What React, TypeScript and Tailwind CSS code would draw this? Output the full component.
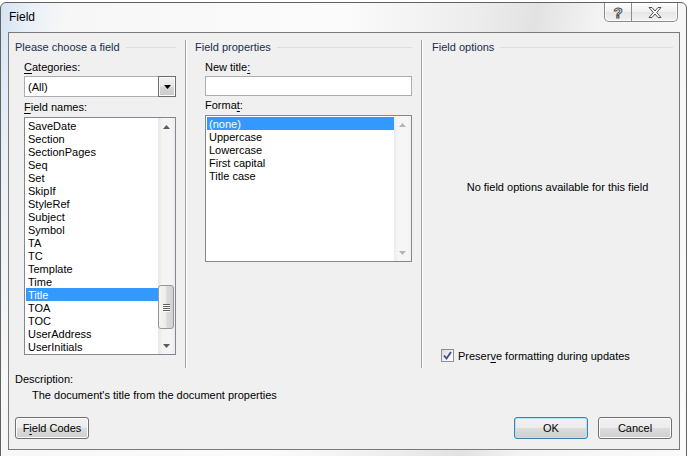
const FIELD_NAMES = [
  "SaveDate",
  "Section",
  "SectionPages",
  "Seq",
  "Set",
  "SkipIf",
  "StyleRef",
  "Subject",
  "Symbol",
  "TA",
  "TC",
  "Template",
  "Time",
  "Title",
  "TOA",
  "TOC",
  "UserAddress",
  "UserInitials",
];

const FORMATS = ["(none)", "Uppercase", "Lowercase", "First capital", "Title case"];

function Arrow({ dir, disabled }: { dir: "up" | "down"; disabled?: boolean }) {
  return (
    <svg width="7" height="4" viewBox="0 0 7 4">
      <polygon
        points={dir === "up" ? "3.5,0 7,4 0,4" : "0,0 7,0 3.5,4"}
        fill={disabled ? "#b4b4b4" : "#5c5c5c"}
      />
    </svg>
  );
}

function GroupHeader({ title }: { title: string }) {
  return (
    <div className="flex h-[14px] items-center gap-[6px]">
      <span className="whitespace-nowrap leading-[14px] text-[#1a2d4c]">{title}</span>
      <span className="h-px flex-1 bg-[#d5dfe5]" />
    </div>
  );
}

function ListRow({ label, selected }: { label: string; selected?: boolean }) {
  return (
    <div
      className={`h-[13px] whitespace-nowrap pl-[2px] leading-[15px] ${
        selected ? "bg-[#3399ff] text-white" : "text-black"
      }`}
    >
      {label}
    </div>
  );
}

function Thumb() {
  return (
    <div className="flex h-[44px] w-[16px] flex-col items-center justify-center gap-px rounded-[3px] border border-[#979797] bg-[linear-gradient(90deg,#f4f4f4,#ececec_50%,#dadada_55%,#d2d2d2)]">
      {[0, 1, 2, 3].map((i) => (
        <span key={i} className="h-px w-[7px] bg-[#5f5f5f] shadow-[0_1px_0_#ffffff]" />
      ))}
    </div>
  );
}

function Win7Button({ label, isDefault }: { label: React.ReactNode; isDefault?: boolean }) {
  return (
    <div
      className={`flex h-[22px] w-[74px] items-center justify-center rounded-[3px] border bg-[linear-gradient(180deg,#f2f2f2_0%,#ebebeb_50%,#dddddd_51%,#cfcfcf_100%)] leading-[13px] text-black ${
        isDefault
          ? "border-[#3c7fb1] shadow-[inset_0_0_0_1px_#b4e2f7]"
          : "border-[#707070] shadow-[inset_0_0_0_1px_#fcfcfc]"
      }`}
    >
      {label}
    </div>
  );
}

export default function App() {
  return (
    <div className="h-[456px] w-[687px] overflow-hidden bg-white font-['Liberation_Sans',Arial,sans-serif] text-[11px]">
      <div className="mt-[2px] h-[470px] w-[687px] rounded-t-[6px] border border-[#626262] bg-[linear-gradient(100deg,#d3e3f3_0%,#e9f0f7_4%,#f7f7f7_9%,#fbfbfb_45%,#ededed_62%,#e2e2e2_70%,#f3f3f3_78%,#fafafa_100%)]">
        {/* title bar */}
        <div className="flex h-[29px] items-start justify-between">
          <span className="pl-[8px] pt-[7px] text-[12px] leading-[14px] text-black">Field</span>
          <div className="mr-[8px] flex h-[19px] overflow-hidden rounded-b-[5px] border border-t-0 border-[#8c8c8c] bg-[linear-gradient(180deg,#fdfdfd,#f0f0f0_50%,#e6e6e6_51%,#f2f2f2)] shadow-[inset_0_0_0_1px_#ffffffb0]">
            <div className="flex w-[26px] items-center justify-center">
              <span className="text-[15px] font-bold leading-[15px] text-white [-webkit-text-stroke:1px_#4f4f4f]">?</span>
            </div>
            <div className="flex w-[46px] items-center justify-center border-l border-[#8c8c8c]">
              <svg width="14" height="11" viewBox="0 0 14 11">
                <polygon
                  points="1,0.5 4,0.5 7,4 10,0.5 13,0.5 8.7,5.5 13,10.5 10,10.5 7,7 4,10.5 1,10.5 5.3,5.5"
                  fill="#ffffff"
                  stroke="#4f4f4f"
                  strokeWidth="1"
                  strokeLinejoin="round"
                />
              </svg>
            </div>
          </div>
        </div>

        {/* client area */}
        <div className="ml-[7px] flex h-[418px] w-[672px] flex-col border border-[#7a7a7a] bg-[#f0f0f0] leading-[14px] text-black">
          <div className="flex h-[335px] pt-[7px]">
            {/* left: choose a field */}
            <section className="flex w-[176px] flex-col pl-[6px] pr-[9px]">
              <GroupHeader title="Please choose a field" />
              <div className="ml-[9px] flex flex-col">
                <div className="mt-[6px] h-[14px]">
                  <span className="underline underline-offset-2">C</span>ategories:
                </div>
                <div className="mt-[2px] flex h-[21px] w-[152px]">
                  <div className="flex flex-1 items-center border border-r-0 border-[#abadb3] bg-white pl-[3px]">
                    (All)
                  </div>
                  <div className="flex w-[18px] items-center justify-center border border-[#6d6d6d] bg-[linear-gradient(180deg,#f3f3f3,#e6e6e6_50%,#d6d6d6_51%,#cbcbcb)] shadow-[inset_0_0_0_1px_#fafafa]">
                    <svg width="7" height="4" viewBox="0 0 7 4">
                      <polygon points="0,0 7,0 3.5,4" fill="#000000" />
                    </svg>
                  </div>
                </div>
                <div className="mt-[3px] h-[14px]">
                  <span className="underline underline-offset-2">F</span>ield names:
                </div>
                <div className="mt-[3px] flex h-[238px] w-[152px] border border-[#828790] bg-white">
                  <div className="flex-1 py-px pl-px">
                    {FIELD_NAMES.map((name) => (
                      <ListRow key={name} label={name} selected={name === "Title"} />
                    ))}
                  </div>
                  <div className="flex w-[17px] flex-col bg-[linear-gradient(90deg,#e6e6e6,#f4f4f4_25%,#f4f4f4_75%,#ededed)]">
                    <div className="flex h-[17px] items-center justify-center">
                      <Arrow dir="up" />
                    </div>
                    <div className="h-[150px]" />
                    <Thumb />
                    <div className="flex-1" />
                    <div className="flex h-[17px] items-center justify-center">
                      <Arrow dir="down" />
                    </div>
                  </div>
                </div>
              </div>
            </section>

            <div className="w-[2px] border-l border-r border-l-[#a0a0a0] border-r-white" />

            {/* middle: field properties */}
            <section className="flex w-[234px] flex-col pl-[8px] pr-[9px]">
              <GroupHeader title="Field properties" />
              <div className="ml-[10px] flex flex-col">
                <div className="mt-[6px] h-[14px]">
                  New title<span className="underline underline-offset-2">:</span>
                </div>
                <div className="mt-[2px] h-[20px] w-[207px] border border-[#abadb3] bg-white" />
                <div className="mt-[2px] h-[14px]">
                  Forma<span className="underline underline-offset-2">t</span>:
                </div>
                <div className="mt-[3px] flex h-[147px] w-[207px] border border-[#828790] bg-white">
                  <div className="flex-1 py-px pl-px">
                    {FORMATS.map((name) => (
                      <ListRow key={name} label={name} selected={name === "(none)"} />
                    ))}
                  </div>
                  <div className="flex w-[17px] flex-col justify-between bg-[linear-gradient(90deg,#ececec,#f6f6f6_25%,#f6f6f6_75%,#f0f0f0)]">
                    <div className="flex h-[17px] items-center justify-center">
                      <Arrow dir="up" disabled />
                    </div>
                    <div className="flex h-[17px] items-center justify-center">
                      <Arrow dir="down" disabled />
                    </div>
                  </div>
                </div>
              </div>
            </section>

            <div className="w-[2px] border-l border-r border-l-[#a0a0a0] border-r-white" />

            {/* right: field options */}
            <section className="flex flex-1 flex-col pl-[9px] pr-[6px]">
              <GroupHeader title="Field options" />
              <div className="mt-[126px] h-[14px] pl-[10px] text-center">No field options available for this field</div>
              <div className="ml-[9px] mt-[155px] flex h-[13px] items-center gap-[4px]">
                <div className="flex h-[13px] w-[13px] items-center justify-center border border-[#8e8f8f] bg-[linear-gradient(135deg,#d9d9d9,#f4f4f4_60%,#ffffff)]">
                  <svg width="9" height="9" viewBox="0 0 9 9">
                    <path d="M1 4.5 L3.5 7.5 L8 1" fill="none" stroke="#3a4e8c" strokeWidth="1.8" />
                  </svg>
                </div>
                <span className="whitespace-nowrap">
                  Preser<span className="underline underline-offset-2">v</span>e formatting during updates
                </span>
              </div>
            </section>
          </div>

          {/* description */}
          <div className="flex flex-col pl-[6px]">
            <div className="mt-[4px] h-[14px]">Description:</div>
            <div className="mt-[2px] h-[14px] pl-[17px]">The document's title from the document properties</div>
          </div>

          {/* buttons */}
          <div className="mt-[15px] flex items-center justify-between pl-[6px] pr-[7px]">
            <div className="w-[73px]">
              <Win7Button
                label={
                  <>
                    F<span className="underline underline-offset-2">i</span>eld Codes
                  </>
                }
              />
            </div>
            <div className="flex gap-[10px]">
              <Win7Button label="OK" isDefault />
              <Win7Button label="Cancel" />
            </div>
          </div>
        </div>
      </div>
    </div>
  );
}
